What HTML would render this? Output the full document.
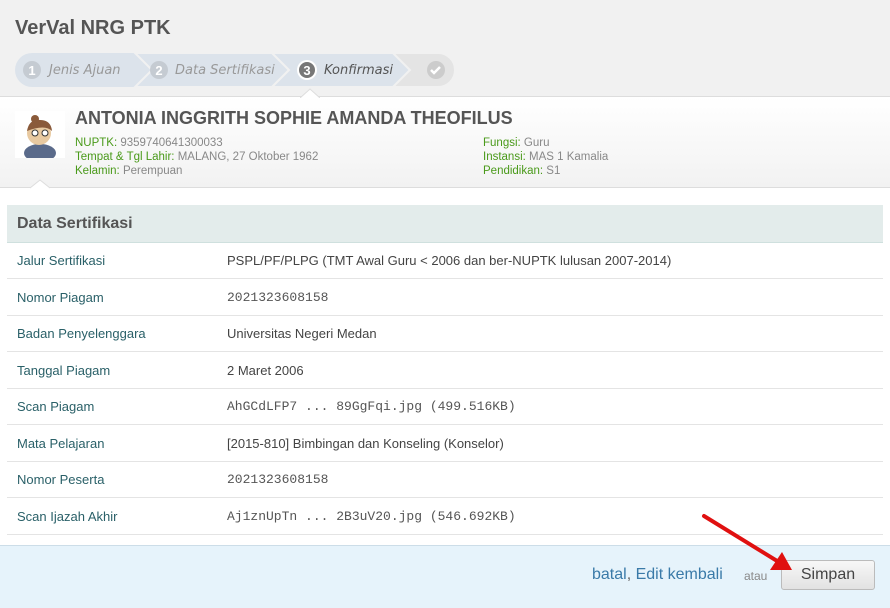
<!DOCTYPE html>
<html><head><style>
*{margin:0;padding:0;box-sizing:border-box}
body{width:890px;height:608px;overflow:hidden;background:#fff;font-family:"Liberation Sans",sans-serif;position:relative}
.top{position:absolute;left:0;top:0;width:890px;height:97px;background:#f1f1f1;border-bottom:1px solid #ddd}
h1{position:absolute;left:15px;top:17px;font-size:20px;color:#555;font-weight:bold}
.lbl{position:absolute;top:0;height:34px;line-height:36px;font-style:italic;font-size:13px;color:#999;font-family:"DejaVu Sans",sans-serif}
.prof{position:absolute;left:0;top:97px;width:890px;height:91px;background:linear-gradient(#fff,#f2f2f2);border-bottom:1px solid #ddd}
.name{position:absolute;left:75px;top:108px;font-size:18px;font-weight:bold;color:#555}
.info{position:absolute;font-size:11.5px;line-height:14px;color:#888}
.info b{font-weight:normal;color:#4a9a1a}
.th{position:absolute;left:7px;top:205px;width:876px;height:38px;background:#e3eceb;border-bottom:1px solid #cfe0de;font-size:16px;font-weight:bold;color:#555;padding:10px 10px}
.row{position:absolute;left:7px;width:876px;height:37px;border-bottom:1px solid #e4e4e4;font-size:13px;color:#444}
.row span{position:absolute;top:11px}
.row .k{left:10px;color:#2a6068}
.row .v{left:220px}
.row .m{left:220px;font-family:"Liberation Mono",monospace;font-size:13px;top:11px;color:#555}
.foot{position:absolute;left:0;top:545px;width:890px;height:63px;background:#e6f3fb;border-top:1px solid #ccdde8}
</style></head><body>
<div class="top"></div>
<h1>VerVal NRG PTK</h1>
<svg style="position:absolute;left:15px;top:53px" width="445" height="35">
<path d="M17 0H120L137 17L120 34H17A17 17 0 0 1 17 0Z" fill="#dce3eb"/>
<path d="M120 0H257L274 17L257 34H120L137 17Z" fill="#dce3eb" stroke="#f1f1f1" stroke-width="2"/>
<path d="M257 0H378L395 17L378 34H257L274 17Z" fill="#dce3eb" stroke="#f1f1f1" stroke-width="2"/>
<path d="M378 0H423A17 17 0 0 1 423 34H378L395 17Z" fill="#e4e4e4" stroke="#f1f1f1" stroke-width="2"/>
<circle cx="17" cy="17" r="9" fill="#c5cbd2"/><circle cx="144" cy="17" r="9" fill="#c5cbd2"/>
<circle cx="292" cy="17" r="10" fill="#fff"/><circle cx="292" cy="17" r="8" fill="#777"/>
<circle cx="421" cy="17" r="9" fill="#ccc"/><path d="M416 17l3 3 6-6" stroke="#fff" stroke-width="2.5" fill="none"/>
<text x="17" y="22" font-size="13" font-weight="bold" fill="#fff" text-anchor="middle" font-family="Liberation Sans">1</text>
<text x="144" y="22" font-size="13" font-weight="bold" fill="#fff" text-anchor="middle" font-family="Liberation Sans">2</text>
<text x="292" y="22" font-size="13" font-weight="bold" fill="#fff" text-anchor="middle" font-family="Liberation Sans">3</text>
</svg>
<div class="lbl" style="left:49px;top:53px">Jenis Ajuan</div>
<div class="lbl" style="left:175px;top:53px">Data Sertifikasi</div>
<div class="lbl" style="left:324px;top:53px;color:#555">Konfirmasi</div>
<div class="prof"></div>
<svg style="position:absolute;left:300px;top:88px" width="20" height="10"><path d="M0 10L10 1L20 10" fill="#fff" stroke="#ddd"/></svg>
<svg style="position:absolute;left:30px;top:179px" width="20" height="10"><path d="M0 9L10 1L20 9" fill="#fff" stroke="#ddd"/></svg>
<svg style="position:absolute;left:15px;top:111px" width="50" height="47"><rect width="50" height="47" fill="#fff"/><ellipse cx="25" cy="42" rx="16" ry="9" fill="#5a6a8a"/><circle cx="24" cy="22" r="12" fill="#e8c9a0"/><path d="M12 20Q14 8 25 9Q36 9 37 20Q30 13 12 20Z" fill="#8a5a3a"/><circle cx="20" cy="8" r="4" fill="#8a5a3a"/><circle cx="20" cy="22" r="3" fill="#fff" stroke="#333"/><circle cx="30" cy="22" r="3" fill="#fff" stroke="#333"/></svg>
<div class="name">ANTONIA INGGRITH SOPHIE AMANDA THEOFILUS</div>
<div class="info" style="left:75px;top:136px"><b>NUPTK:</b> 9359740641300033<br><b>Tempat &amp; Tgl Lahir:</b> MALANG, 27 Oktober 1962<br><b>Kelamin:</b> Perempuan</div>
<div class="info" style="left:483px;top:136px"><b>Fungsi:</b> Guru<br><b>Instansi:</b> MAS 1 Kamalia<br><b>Pendidikan:</b> S1</div>
<div class="th">Data Sertifikasi</div>
<div class="row" style="top:242px"><span class="k">Jalur Sertifikasi</span><span class="v">PSPL/PF/PLPG (TMT Awal Guru &lt; 2006 dan ber-NUPTK lulusan 2007-2014)</span></div>
<div class="row" style="top:279px"><span class="k">Nomor Piagam</span><span class="m">2021323608158</span></div>
<div class="row" style="top:315px"><span class="k">Badan Penyelenggara</span><span class="v">Universitas Negeri Medan</span></div>
<div class="row" style="top:352px"><span class="k">Tanggal Piagam</span><span class="v">2 Maret 2006</span></div>
<div class="row" style="top:388px"><span class="k">Scan Piagam</span><span class="m">AhGCdLFP7 ... 89GgFqi.jpg (499.516KB)</span></div>
<div class="row" style="top:425px"><span class="k">Mata Pelajaran</span><span class="v">[2015-810] Bimbingan dan Konseling (Konselor)</span></div>
<div class="row" style="top:461px"><span class="k">Nomor Peserta</span><span class="m">2021323608158</span></div>
<div class="row" style="top:498px"><span class="k">Scan Ijazah Akhir</span><span class="m">Aj1znUpTn ... 2B3uV20.jpg (546.692KB)</span></div>
<div class="foot"></div>
<div style="position:absolute;left:592px;top:566px;font-size:16px;color:#3a7aa8">batal<span style="color:#666">,</span> Edit kembali</div>
<div style="position:absolute;left:744px;top:569px;font-size:12px;color:#888">atau</div>
<div style="position:absolute;left:781px;top:560px;width:94px;height:30px;border:1px solid #bbb;border-radius:3px;background:linear-gradient(#f7f7f7,#e2e2e2);font-size:16px;color:#444;text-align:center;line-height:28px">Simpan</div>
<svg style="position:absolute;left:690px;top:510px" width="120" height="70"><path d="M14 6L92 54" stroke="#e01010" stroke-width="4" stroke-linecap="round"/><path d="M102 60L80 60L92 42Z" fill="#e01010"/></svg>
</body></html>
